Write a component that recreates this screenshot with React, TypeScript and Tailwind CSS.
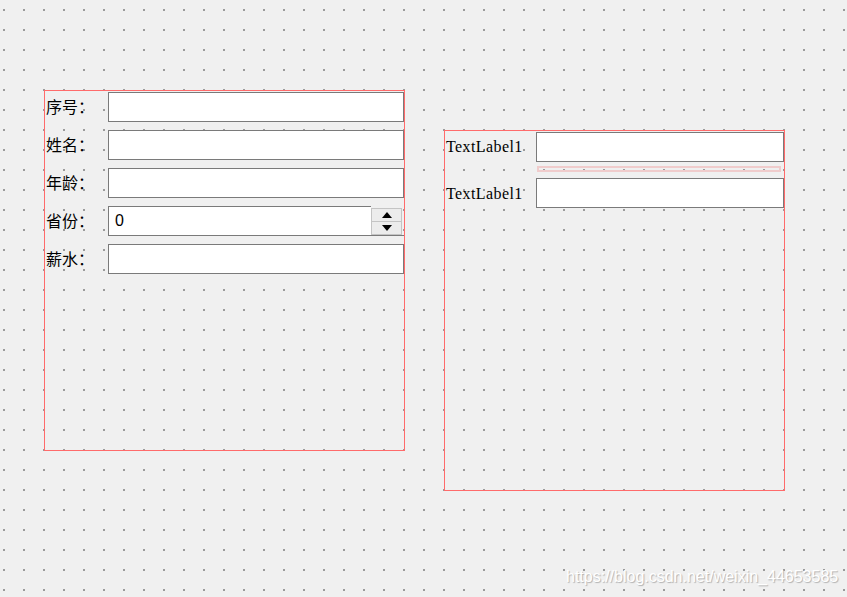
import { ReactNode } from 'react';

const cjk = "font-['Noto_Sans_CJK_SC',sans-serif]";
const serif = "font-['Liberation_Serif',serif]";

function LineEdit({ children }: { children?: ReactNode }) {
  return (
    <div className="h-[30px] border border-[#7a7a7a] bg-white flex items-center px-[6px] text-[16px] text-black">
      {children}
    </div>
  );
}

function SpinBox({ value }: { value: string }) {
  return (
    <div className="h-[30px] flex">
      <div className="flex-1 border-t border-l border-b border-[#7a7a7a] bg-white flex items-center pl-[6px] text-[16px] font-['Liberation_Sans',sans-serif] text-black">
        {value}
      </div>
      <div className="w-[33px] border-b border-[#7a7a7a] pt-[2px]">
        <div className="w-[31px] h-[27px] border border-[#c4c4c4] bg-[#ececec] flex flex-col">
          <div className="flex-1 flex items-center justify-center border-b border-[#c4c4c4]">
            <svg width="10" height="6" viewBox="0 0 10 6">
              <path d="M0 6 L5 0 L10 6 Z" fill="#000" />
            </svg>
          </div>
          <div className="flex-1 flex items-center justify-center">
            <svg width="10" height="6" viewBox="0 0 10 6">
              <path d="M0 0 L10 0 L5 6 Z" fill="#000" />
            </svg>
          </div>
        </div>
      </div>
    </div>
  );
}

const leftRows = [
  { label: '序号：' },
  { label: '姓名：' },
  { label: '年龄：' },
  { label: '省份：', spin: true },
  { label: '薪水：' },
];

export default function App() {
  return (
    <div className="relative w-full h-[597px] overflow-hidden bg-[#f0f0f0] bg-[radial-gradient(circle_at_1px_1px,#9a9a9a_1.2px,transparent_1.4px)] bg-[size:20px_20px] bg-[position:3px_9px]">
      <div className="flex items-start pl-[44px] pt-[90px] gap-[39px]">
        {/* form 1 */}
        <div className="w-[361px] h-[361px] border border-[#ff6b6b] pt-[1px]">
          <div className="grid grid-cols-[63px_1fr] gap-y-2">
            {leftRows.map((r) => (
              <div key={r.label} className="contents">
                <div className={`flex items-center pl-[1px] pb-[3px] text-[16px] text-black ${cjk}`}>
                  {r.label}
                </div>
                {r.spin ? <SpinBox value="0" /> : <LineEdit />}
              </div>
            ))}
          </div>
        </div>

        {/* form 2 */}
        <div className="mt-[40px] w-[341px] h-[361px] border border-[#ff6b6b] pt-[1px]">
          <div className="grid grid-cols-[91px_1fr]">
            <div className={`flex items-center whitespace-nowrap pl-[1px] text-[16px] tracking-[0.4px] text-black ${serif}`}>
              TextLabel1
            </div>
            <LineEdit />
            <div />
            <div className="pt-[4px] pb-[6px] pl-[1px] pr-[3px]">
              <div className="h-[6px] border-2 border-[#f0cccc]" />
            </div>
            <div className={`flex items-center whitespace-nowrap pl-[1px] pt-[2px] text-[16px] tracking-[0.4px] text-black ${serif}`}>
              TextLabel1
            </div>
            <LineEdit />
          </div>
        </div>
      </div>

      <div className="absolute left-[566px] top-[567px] text-[16px] leading-[20px] text-white font-['Liberation_Sans',sans-serif] [text-shadow:1px_1px_1px_#b0b0b0]">
        https://blog.csdn.net/weixin_44653585
      </div>
    </div>
  );
}
